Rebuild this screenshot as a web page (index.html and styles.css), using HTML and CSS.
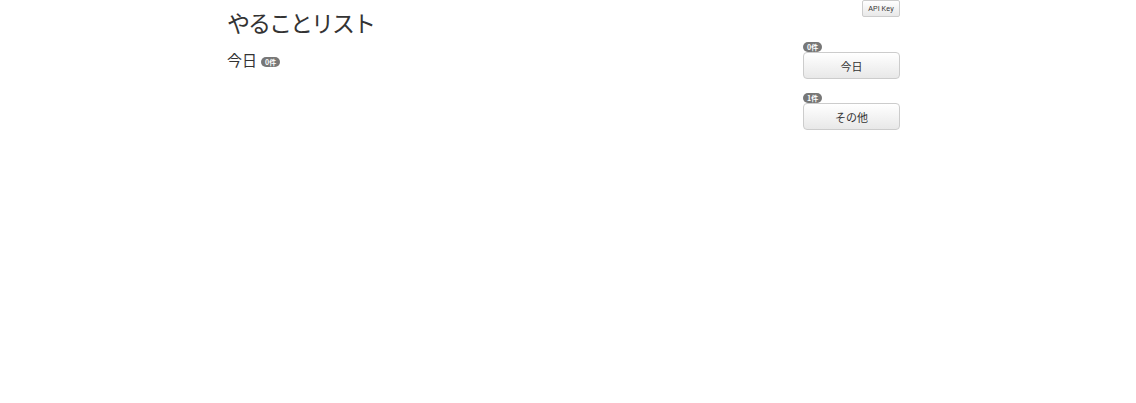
FILE: index.html
```html
<!DOCTYPE html>
<html lang="ja">
<head>
<meta charset="utf-8">
<title>やることリスト</title>
<link rel="stylesheet" href="styles.css">
</head>
<body>
<div class="container">
  <div class="topbar">
    <button class="btn btn-xs">API Key</button>
  </div>
  <div class="row">
    <div class="main">
      <h1 class="title">やることリスト</h1>
      <h2 class="section">今日 <span class="badge">0件</span></h2>
    </div>
    <div class="side">
      <div class="group">
        <span class="badge">0件</span>
        <button class="btn btn-block">今日</button>
      </div>
      <div class="group">
        <span class="badge">1件</span>
        <button class="btn btn-block">その他</button>
      </div>
    </div>
  </div>
</div>
</body>
</html>
```
FILE: styles.css
```css
* { box-sizing: border-box; }
body {
  margin: 0;
  background: #fff;
  color: #333;
  font-family: "Noto Sans CJK JP", "Liberation Sans", sans-serif;
}
.container {
  width: 682px;
  margin: 0 auto;
  padding-right: 9px;
}
.topbar {
  display: flex;
  justify-content: flex-end;
  height: 0;
}
.row {
  display: flex;
}
.main { flex: 1; }
.side {
  width: 97px;
  padding-top: 42px;
  display: flex;
  flex-direction: column;
  gap: 14px;
}
.title {
  margin: 6px 0 0;
  font-size: 23px;
  letter-spacing: -2px;
  font-weight: 400;
  line-height: 32px;
}
.section {
  margin: 12px 0 0;
  font-size: 15px;
  font-weight: 400;
  line-height: 20px;
  display: flex;
  align-items: center;
  gap: 4px;
}
.badge {
  display: inline-block;
  background: #777;
  color: #fff;
  font-size: 7px;
  font-weight: 700;
  line-height: 10px;
  height: 10px;
  padding: 0 4px;
  border-radius: 5px;
  width: fit-content;
}
.section .badge { margin-top: 3px; }
.group {
  display: flex;
  flex-direction: column;
}
.btn {
  font-family: inherit;
  color: #333;
  background: linear-gradient(#fff, #e8e8e8);
  border: 1px solid #ccc;
  border-radius: 4px;
  cursor: pointer;
}
.btn-xs {
  width: 38px;
  height: 17px;
  padding: 0;
  font-size: 7px;
  font-family: "Liberation Sans", sans-serif;
  border-radius: 2px;
}
.btn-block {
  width: 97px;
  height: 27px;
  padding: 0;
  font-size: 11px;
}
```
